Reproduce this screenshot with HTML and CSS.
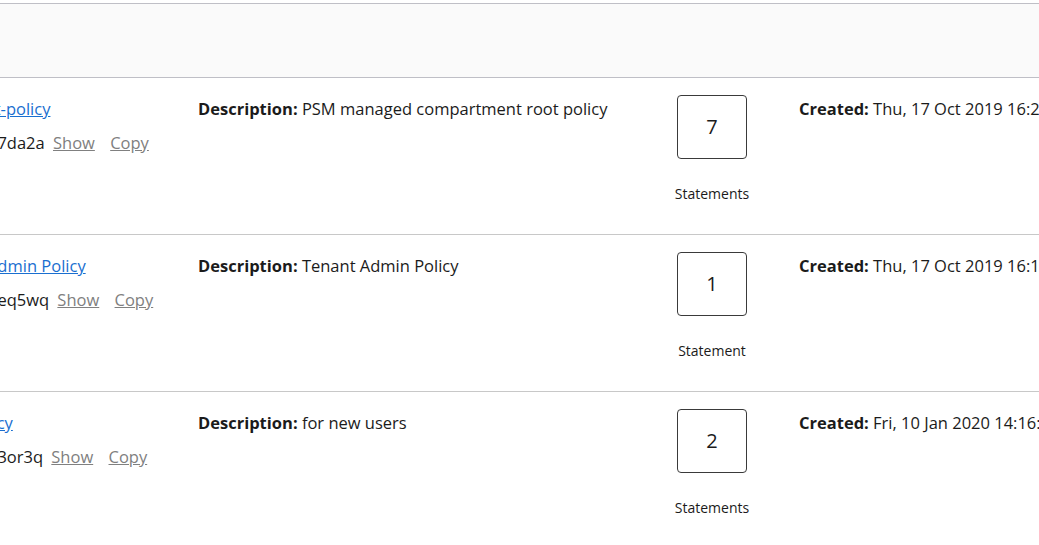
FILE: index.html
```html
<!DOCTYPE html>
<html lang="en">
<head>
<meta charset="utf-8">
<title>Policies</title>
<link rel="stylesheet" href="styles.css">
</head>
<body>
<div class="viewport">
  <div class="table">
    <div class="table-header"></div>

    <div class="row">
      <div class="cell name-cell">
        <a class="name-link" href="#">PSM-root-policy</a>
        <div class="ocid"><b>OCID:</b> ...7da2a <a class="action" href="#">Show</a> <a class="action" href="#">Copy</a></div>
      </div>
      <div class="cell desc-cell"><b>Description:</b> PSM managed compartment root policy</div>
      <div class="cell stat-cell">
        <div class="stat-box">7</div>
        <div class="stat-label">Statements</div>
      </div>
      <div class="cell created-cell"><b>Created:</b> Thu, 17 Oct 2019 16:22:41 UTC</div>
    </div>

    <div class="row">
      <div class="cell name-cell">
        <a class="name-link" href="#">Tenant Admin Policy</a>
        <div class="ocid"><b>OCID:</b> ...eq5wq <a class="action" href="#">Show</a> <a class="action" href="#">Copy</a></div>
      </div>
      <div class="cell desc-cell"><b>Description:</b> Tenant Admin Policy</div>
      <div class="cell stat-cell">
        <div class="stat-box">1</div>
        <div class="stat-label">Statement</div>
      </div>
      <div class="cell created-cell"><b>Created:</b> Thu, 17 Oct 2019 16:15:07 UTC</div>
    </div>

    <div class="row">
      <div class="cell name-cell">
        <a class="name-link" href="#">user-policy</a>
        <div class="ocid"><b>OCID:</b> ...3or3q <a class="action" href="#">Show</a> <a class="action" href="#">Copy</a></div>
      </div>
      <div class="cell desc-cell"><b>Description:</b> for new users</div>
      <div class="cell stat-cell">
        <div class="stat-box">2</div>
        <div class="stat-label">Statements</div>
      </div>
      <div class="cell created-cell"><b>Created:</b> Fri, 10 Jan 2020 14:16:52 UTC</div>
    </div>
  </div>
</div>
</body>
</html>
```

FILE: styles.css
```css
html, body {
  margin: 0;
  padding: 0;
  background: #ffffff;
}

body {
  font-family: "Open Sans", "Noto Sans", sans-serif;
  font-size: 16.5px;
  color: #1b1b1b;
}

.viewport {
  width: 1039px;
  height: 545px;
  overflow: hidden;
  padding-top: 3px;
  box-sizing: border-box;
}

.table {
  margin-left: -71px;
  width: 1300px;
}

.table-header {
  height: 73px;
  background: #fafafa;
  border-top: 1px solid #bfbfc6;
  border-bottom: 1px solid #bfbfc6;
}

.row {
  display: grid;
  grid-template-columns: 269px 479px 70px 1fr;
  height: 156px;
  border-bottom: 1px solid #c8c8c8;
}

.cell {
  padding-top: 20px;
  line-height: 22px;
  white-space: nowrap;
}

.name-link {
  color: #1a6fd0;
  text-decoration: underline;
}

.ocid {
  margin-top: 12px;
  padding-left: 6px;
}

.ocid b {
  font-weight: 600;
}

.action {
  color: #808080;
  text-decoration: underline;
  margin-left: 4px;
  margin-right: 7px;
}

.desc-cell b,
.created-cell b {
  font-weight: 700;
}

.stat-cell {
  padding-top: 17px;
  display: flex;
  flex-direction: column;
  align-items: center;
}

.stat-box {
  width: 70px;
  height: 64px;
  box-sizing: border-box;
  border: 1px solid #3a3a3a;
  border-radius: 4px;
  display: flex;
  align-items: center;
  justify-content: center;
  font-size: 20px;
}

.stat-label {
  margin-top: 25px;
  font-size: 14px;
  line-height: 20px;
}

.created-cell {
  padding-left: 52px;
}
```
